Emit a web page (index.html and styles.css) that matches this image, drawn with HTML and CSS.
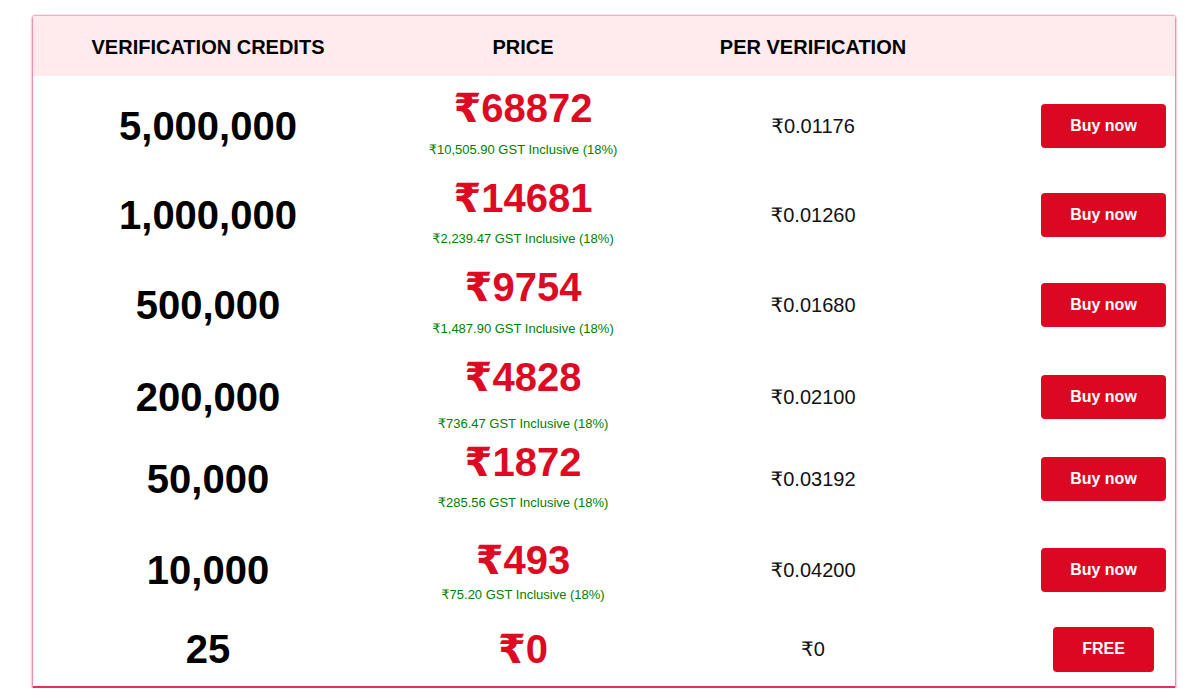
FILE: index.html
```html
<!DOCTYPE html>
<html lang="en">
<head>
<meta charset="utf-8">
<title>Verification Credits Pricing</title>
<link rel="stylesheet" href="styles.css">
</head>
<body>
<div class="card">
  <div class="row head">
    <div class="th">VERIFICATION CREDITS</div>
    <div class="th">PRICE</div>
    <div class="th">PER VERIFICATION</div>
    <div class="th"></div>
  </div>
  <div class="body">
    <div class="row item">
      <div class="credits">5,000,000</div>
      <div class="price"><div class="amount">₹68872</div><div class="gst">₹10,505.90 GST Inclusive (18%)</div></div>
      <div class="per">₹0.01176</div>
      <div class="action"><button class="btn">Buy now</button></div>
    </div>
    <div class="row item">
      <div class="credits">1,000,000</div>
      <div class="price"><div class="amount">₹14681</div><div class="gst">₹2,239.47 GST Inclusive (18%)</div></div>
      <div class="per">₹0.01260</div>
      <div class="action"><button class="btn">Buy now</button></div>
    </div>
    <div class="row item">
      <div class="credits">500,000</div>
      <div class="price"><div class="amount">₹9754</div><div class="gst">₹1,487.90 GST Inclusive (18%)</div></div>
      <div class="per">₹0.01680</div>
      <div class="action"><button class="btn">Buy now</button></div>
    </div>
    <div class="row item item--low">
      <div class="credits">200,000</div>
      <div class="price price--wide"><div class="amount">₹4828</div><div class="gst">₹736.47 GST Inclusive (18%)</div></div>
      <div class="per">₹0.02100</div>
      <div class="action"><button class="btn">Buy now</button></div>
    </div>
    <div class="row item">
      <div class="credits">50,000</div>
      <div class="price"><div class="amount">₹1872</div><div class="gst">₹285.56 GST Inclusive (18%)</div></div>
      <div class="per">₹0.03192</div>
      <div class="action"><button class="btn">Buy now</button></div>
    </div>
    <div class="row item">
      <div class="credits">10,000</div>
      <div class="price price--tight"><div class="amount">₹493</div><div class="gst">₹75.20 GST Inclusive (18%)</div></div>
      <div class="per">₹0.04200</div>
      <div class="action"><button class="btn">Buy now</button></div>
    </div>
    <div class="row item">
      <div class="credits">25</div>
      <div class="price price--solo"><div class="amount">₹0</div></div>
      <div class="per">₹0</div>
      <div class="action"><button class="btn btn--free">FREE</button></div>
    </div>
  </div>
</div>
</body>
</html>
```
FILE: styles.css
```css
* { box-sizing: border-box; }

html, body {
  margin: 0;
  padding: 0;
  background: #ffffff;
}

body {
  font-family: "Liberation Sans", Arial, "DejaVu Sans", sans-serif;
  color: #000;
}

.card {
  width: 1142px;
  margin: 16px 0 0 33px;
  background: #fff;
  border-bottom: 2px solid #e8305a;
  box-shadow: 0 1px 3px rgba(225, 25, 70, 0.8), 0 0 2px rgba(230, 40, 90, 0.8);
  padding-bottom: 3.5px;
}

.row {
  display: grid;
  grid-template-columns: 350px 280px 300px 1fr;
  align-items: center;
  text-align: center;
}

.head {
  height: 60px;
  padding-top: 2px;
  background: #ffebee;
}

.th {
  font-size: 20px;
  font-weight: 700;
  color: #000;
}

.body {
  padding-top: 5px;
}

.item {
  padding: 4px 0;
}

.credits {
  font-size: 40px;
  font-weight: 700;
  line-height: 46px;
  height: 46px;
  color: #000;
}

.price {
  display: flex;
  flex-direction: column;
  align-items: center;
  padding-bottom: 10px;
}

.amount {
  font-size: 40px;
  font-weight: 700;
  line-height: 46px;
  height: 46px;
  color: #dd0a24;
}

.gst {
  margin-top: 10.5px;
  font-size: 13px;
  line-height: 15px;
  height: 15px;
  color: #008000;
}

.price--wide { padding-bottom: 0; }
.price--wide .gst { margin-top: 16px; }

.price--tight { padding-top: 9px; }
.price--tight .gst { margin-top: 3.5px; }

.price--solo { padding: 6px 0 7px; }

.item--low .credits,
.item--low .per,
.item--low .action {
  margin-top: 10px;
}

.per {
  font-size: 20px;
  line-height: 24px;
  height: 24px;
  color: #111;
}

.action {
  display: flex;
  justify-content: center;
  padding-left: 69px;
}

.btn {
  font-family: "Liberation Sans", Arial, sans-serif;
  font-size: 16px;
  font-weight: 700;
  line-height: 20px;
  color: #fff;
  background: #dc0720;
  border: none;
  border-radius: 4px;
  padding: 12px 29px;
  width: 125px;
  cursor: pointer;
}

.btn--free {
  width: 101px;
  padding: 12.5px 0;
}
```
